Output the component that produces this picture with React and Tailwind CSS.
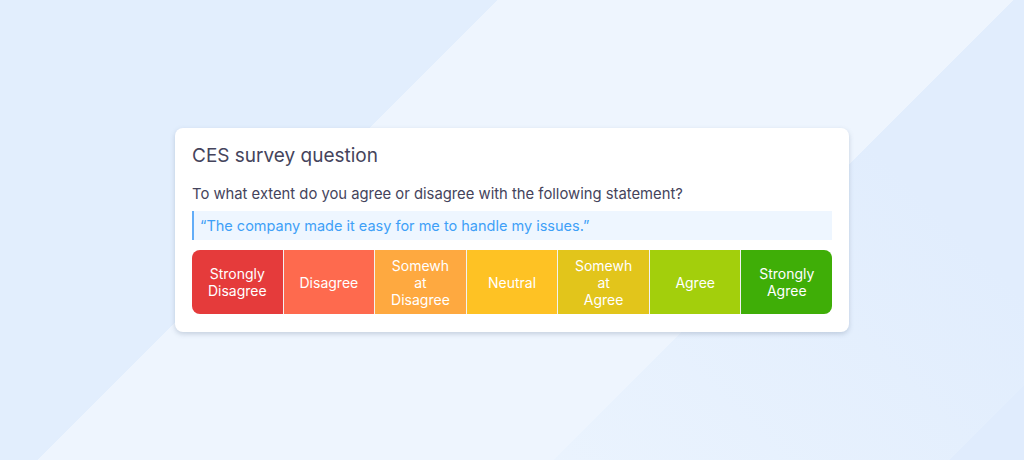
const SCALE = [
  { words: ['Strongly', 'Disagree'], bg: 'bg-[#e53b3b]' },
  { words: ['Disagree'], bg: 'bg-[#fe6a4e]' },
  { words: ['Somewhat', 'Disagree'], bg: 'bg-[#fea940]' },
  { words: ['Neutral'], bg: 'bg-[#fec224]' },
  { words: ['Somewhat', 'Agree'], bg: 'bg-[#e2c51b]' },
  { words: ['Agree'], bg: 'bg-[#a3cf0c]' },
  { words: ['Strongly', 'Agree'], bg: 'bg-[#3fae07]' },
];

export default function App() {
  return (
    <div
      className="h-[460px] w-full flex items-center justify-center bg-[linear-gradient(135deg,#e2eefd_33.5%,#eef5fe_33.5%,#eef5fe_68.3%,transparent_68.3%,transparent_95%,#e0ecfd_95%),linear-gradient(225deg,#e1edfd_20%,#edf5fe_75%)]"
      style={{ fontFamily: 'Inter, "Noto Sans", sans-serif' }}
    >
      <div className="w-[674px] bg-white rounded-lg shadow-[0_2px_5px_rgba(90,110,140,0.28)] px-[17px] pt-[16px] pb-[18px]">
        <h2 className="text-[19px] leading-[24px] text-[#45445c]">CES survey question</h2>

        <p className="mt-[16px] text-[14.8px] leading-[20px] text-[#45445c]">
          To what extent do you agree or disagree with the following statement?
        </p>

        <div className="mt-[7px] h-[29px] flex items-center bg-[#eef6ff] border-l-2 border-[#62adf8] pl-[6px] text-[14.5px] text-[#3ea0f7]">
          “The company made it easy for me to handle my issues.”
        </div>

        {/* seven-point agreement scale, hairline gaps show the light backing */}
        <div className="mt-[10px] h-[64px] flex gap-px bg-[#f2f2f2] rounded-lg overflow-hidden">
          {SCALE.map((item) => (
            <div
              key={item.words.join(' ')}
              className={`flex-1 min-w-0 flex flex-col items-center justify-center px-[14px] text-center text-white text-[14px] leading-[17px] ${item.bg}`}
            >
              {item.words.map((w) => (
                <span key={w} className="block w-full wrap-anywhere">
                  {w}
                </span>
              ))}
            </div>
          ))}
        </div>
      </div>
    </div>
  );
}
